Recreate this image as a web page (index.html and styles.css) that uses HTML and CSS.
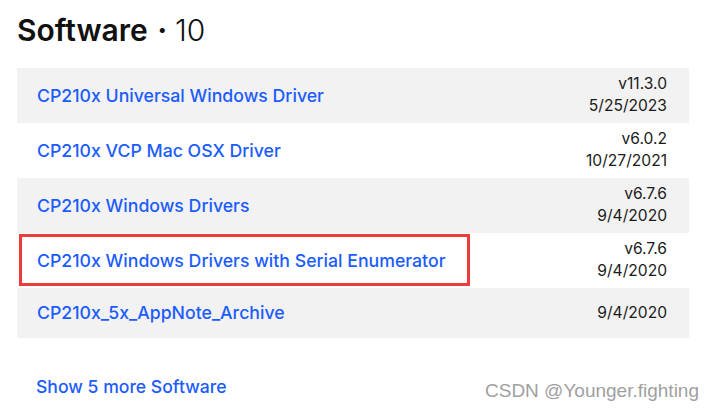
FILE: index.html
```html
<!DOCTYPE html>
<html lang="en">
<head>
  <meta charset="UTF-8" />
  <meta name="viewport" content="width=device-width, initial-scale=1.0"/>
  <title>Software</title>
  <link rel="stylesheet" href="styles.css">
</head>
<body>

  <div class="section">
    <h2 class="title">Software <span class="dot">&middot;</span> <span class="count">10</span></h2>

    <div class="list">
      <div class="row">
        <a href="#" class="name">CP210x Universal Windows Driver</a>
        <div class="meta">
          <div>v11.3.0</div>
          <div>5/25/2023</div>
        </div>
      </div>
      <div class="row">
        <a href="#" class="name">CP210x VCP Mac OSX Driver</a>
        <div class="meta">
          <div>v6.0.2</div>
          <div>10/27/2021</div>
        </div>
      </div>
      <div class="row">
        <a href="#" class="name">CP210x Windows Drivers</a>
        <div class="meta">
          <div>v6.7.6</div>
          <div>9/4/2020</div>
        </div>
      </div>
      <div class="row marked">
        <a href="#" class="name">CP210x Windows Drivers with Serial Enumerator</a>
        <div class="meta">
          <div>v6.7.6</div>
          <div>9/4/2020</div>
        </div>
      </div>
      <div class="row">
        <a href="#" class="name">CP210x_5x_AppNote_Archive</a>
        <div class="meta">
          <div>9/4/2020</div>
        </div>
      </div>
    </div>

    <a href="#" class="more">Show 5 more Software</a>
  </div>

  <div class="watermark">CSDN @Younger.fighting</div>

</body>
</html>
```

FILE: styles.css
```css
*, *::before, *::after {
  box-sizing: border-box;
}
body {
  margin: 0;
  background: #fff;
  font-family: Inter, 'Noto Sans', sans-serif;
  color: #222;
}
.section {
  padding: 10px 0 0 17px;
  width: 689px;
}
.title {
  margin: 0 0 18px;
  font-size: 30px;
  line-height: 40px;
  font-weight: 600;
  color: #111;
}
.dot {
  font-weight: 700;
  margin: 0 0 0 2px;
}
.count {
  font-weight: 300;
}
.row {
  display: flex;
  justify-content: space-between;
  align-items: center;
  min-height: 50px;
  padding: 5px 22px 6px 20px;
  position: relative;
}
.row:nth-child(odd) {
  background: #f2f2f2;
}
.name {
  font-size: 17.7px;
  font-weight: 500;
  color: #1b5cff;
  text-decoration: none;
}
.meta {
  text-align: right;
  font-size: 15.6px;
  line-height: 22px;
  color: #1a1a1a;
}
/* red highlight drawn over the fourth row */
.marked::before {
  content: '';
  position: absolute;
  left: 2px;
  top: 1px;
  width: 451px;
  height: 52px;
  border: 3px solid #ef3b3b;
  z-index: 1;
}
.more {
  display: inline-block;
  margin: 38px 0 0 19px;
  font-size: 17.6px;
  font-weight: 500;
  color: #1b5cff;
  text-decoration: none;
}
.watermark {
  position: absolute;
  right: 14px;
  top: 380px;
  font-family: 'Liberation Sans Narrow', 'Liberation Sans', sans-serif;
  font-stretch: condensed;
  font-size: 19px;
  color: #a0a0a0;
}
```
